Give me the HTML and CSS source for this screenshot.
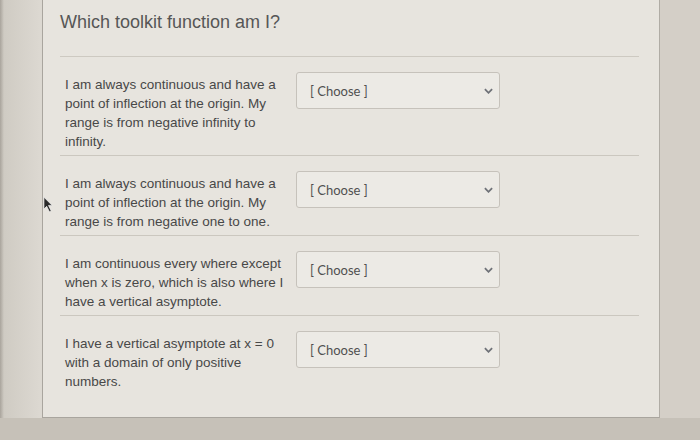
FILE: index.html
```html
<!DOCTYPE html>
<html>
<head>
<meta charset="utf-8">
<link rel="stylesheet" href="styles.css">
</head>
<body>
<div class="page">
  <div class="gutter"></div>
  <div class="card">
    <h1 class="title">Which toolkit function am I?</h1>
    <div class="rows">
      <div class="row">
        <p class="prompt">I am always continuous and have a point of inflection at the origin. My range is from negative infinity to infinity.</p>
        <div class="select"><span>[ Choose ]</span><svg class="chev" viewBox="0 0 10 6" width="9" height="6"><path d="M1 1 L5 5 L9 1" fill="none" stroke="#6f7278" stroke-width="2"/></svg></div>
      </div>
      <div class="row">
        <p class="prompt">I am always continuous and have a point of inflection at the origin. My range is from negative one to one.</p>
        <div class="select"><span>[ Choose ]</span><svg class="chev" viewBox="0 0 10 6" width="9" height="6"><path d="M1 1 L5 5 L9 1" fill="none" stroke="#6f7278" stroke-width="2"/></svg></div>
      </div>
      <div class="row">
        <p class="prompt">I am continuous every where except when x is zero, which is also where I have a vertical asymptote.</p>
        <div class="select"><span>[ Choose ]</span><svg class="chev" viewBox="0 0 10 6" width="9" height="6"><path d="M1 1 L5 5 L9 1" fill="none" stroke="#6f7278" stroke-width="2"/></svg></div>
      </div>
      <div class="row last">
        <p class="prompt">I have a vertical asymptote at x = 0 with a domain of only positive numbers.</p>
        <div class="select"><span>[ Choose ]</span><svg class="chev" viewBox="0 0 10 6" width="9" height="6"><path d="M1 1 L5 5 L9 1" fill="none" stroke="#6f7278" stroke-width="2"/></svg></div>
      </div>
    </div>
  </div>
  <div class="side"></div>
</div>
<svg class="cursor" viewBox="0 0 12 18" width="11" height="17"><path d="M1 1 L1 14 L4 11 L7 17 L9 16 L6 10 L10 10 Z" fill="#2a2a2a" stroke="#eee" stroke-width="0.8"/></svg>
</body>
</html>
```

FILE: styles.css
```css
html, body {
  margin: 0;
  padding: 0;
}
body {
  width: 700px;
  height: 440px;
  overflow: hidden;
  background: #c6c1b8;
  font-family: "Liberation Sans", Arial, sans-serif;
  position: relative;
}
.page {
  display: flex;
  height: 418px;
  background: #d6d2ca;
}
.gutter {
  width: 42px;
  flex: none;
  background: linear-gradient(to right, #a9a49c 0, #cfcbc3 4px, #dcd8d1 40px);
}
.card {
  width: 618px;
  flex: none;
  box-sizing: border-box;
  background: #e7e4de;
  border-left: 1px solid #a9a59e;
  border-right: 1px solid #b0aca5;
  border-bottom: 1px solid #a9a59e;
  padding: 0 20px 0 17px;
}
.side {
  flex: 1;
  background: #d4cfc7;
}
.title {
  margin: 0;
  height: 57px;
  box-sizing: border-box;
  padding-top: 12px;
  font-size: 18px;
  font-weight: normal;
  color: #565656;
  border-bottom: 1px solid #cdc9c1;
}
.row {
  display: flex;
  align-items: flex-start;
  padding: 18px 0 4px 5px;
  border-bottom: 1px solid #cbc7bf;
}
.row.last {
  border-bottom: none;
}
.prompt {
  margin: 0;
  width: 222px;
  flex: none;
  font-size: 13.5px;
  line-height: 19px;
  color: #484848;
}
.select {
  margin-left: 9px;
  margin-top: -3px;
  width: 204px;
  height: 37px;
  box-sizing: border-box;
  border: 1px solid #c6c2bb;
  border-radius: 3px;
  background: #eceae5;
  display: flex;
  align-items: center;
  justify-content: space-between;
  padding: 0 6px 0 13px;
  font-family: Lato, "Open Sans", sans-serif;
  font-size: 13px;
  color: #505050;
}
.cursor {
  position: absolute;
  left: 43px;
  top: 196px;
}
```
